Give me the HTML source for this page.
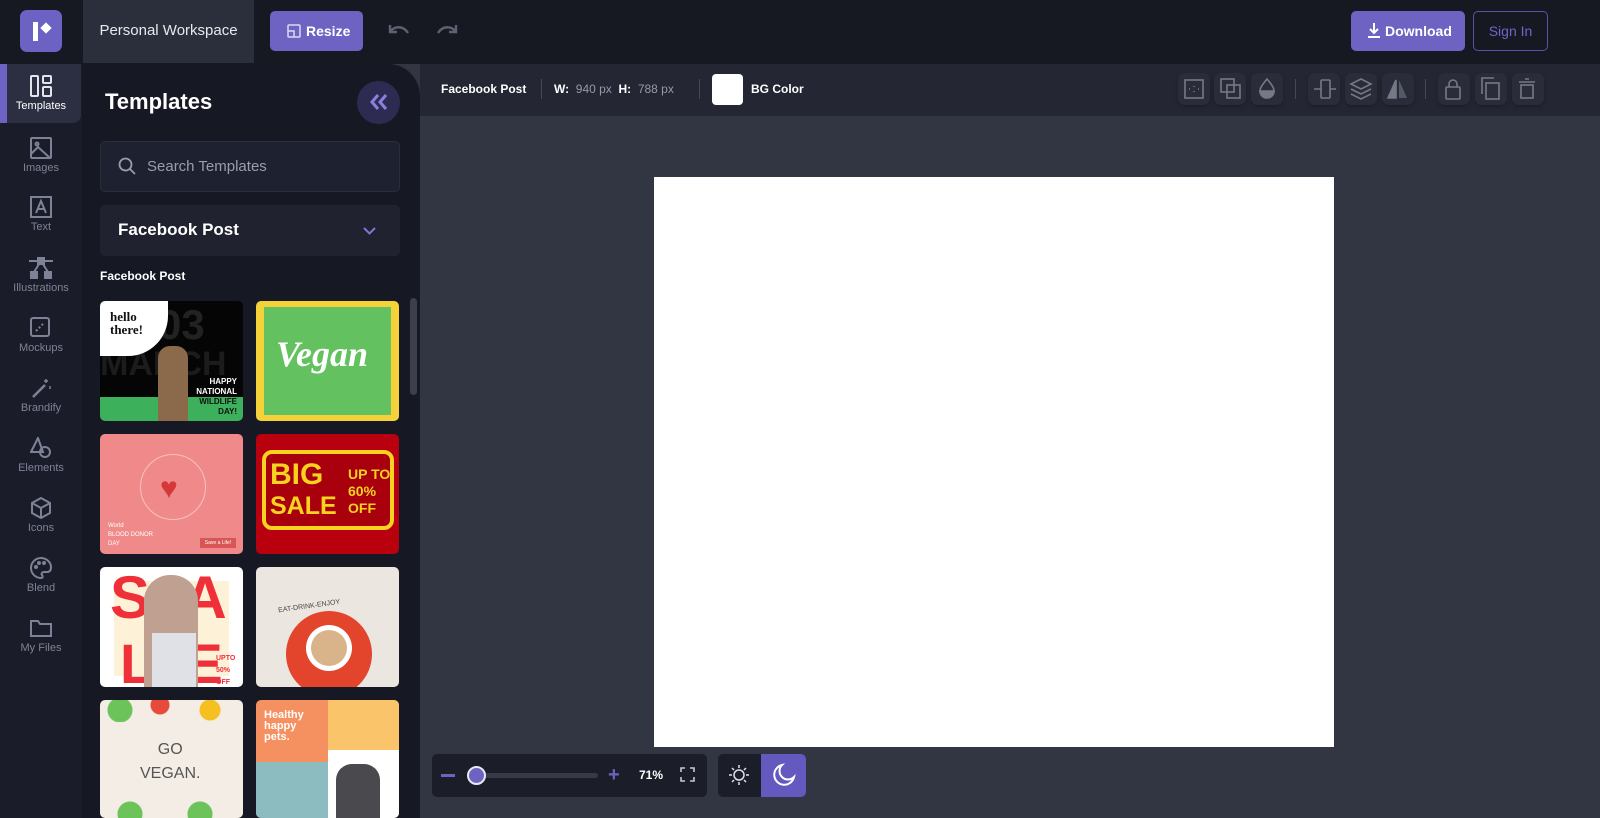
<!DOCTYPE html>
<html><head><meta charset="utf-8"><style>
*{margin:0;padding:0;box-sizing:border-box}
body{width:1600px;height:818px;overflow:hidden;background:#323542;font-family:"Liberation Sans",sans-serif;position:relative;color:#fff}
.a{position:absolute}
.top{left:0;top:0;width:1600px;height:64px;background:#161922}
.side{left:0;top:64px;width:82px;height:754px;background:#1a1d29}
.si{position:absolute;left:0;width:82px;text-align:center;font-size:11px;color:#7d8296}
.si svg{display:block;margin:0 auto 3px}
.panel{left:82px;top:64px;width:338px;height:754px;background:#161923;border-top-right-radius:32px}
.tb{left:420px;top:64px;width:1180px;height:52px;background:#242733}
.ib{position:absolute;top:73px;width:32px;height:32px;border-radius:7px;background:#2a2d39;box-shadow:0 2px 4px rgba(0,0,0,.25)}
.th{position:absolute;border-radius:5px;overflow:hidden}
</style></head><body>
<div class="a top"></div>
<div class="a" style="left:20px;top:10px;width:42px;height:42px;border-radius:7px;background:#6b62c3"></div>
<div class="a" style="left:33px;top:22px;width:5px;height:19px;background:#fff"></div>
<div class="a" style="left:42px;top:24px;width:8px;height:8px;background:#fff;transform:rotate(45deg)"></div>
<div class="a" style="left:83px;top:0;width:171px;height:63px;background:#2b2f3c;font-size:15px;line-height:62px;text-align:center;color:#e8e9ee">Personal Workspace</div>
<div class="a" style="left:270px;top:11px;width:93px;height:40px;border-radius:5px;background:#6e63c2;font-size:14px;font-weight:bold;line-height:40px;padding-left:36px">Resize</div>
<svg class="a" style="left:287px;top:24px" width="14" height="14" viewBox="0 0 14 14" fill="none" stroke="#dcdaf2" stroke-width="1.5"><rect x="1" y="1" width="12" height="12" rx="1"/><path d="M1 7h6v6"/></svg>
<svg class="a" style="left:387px;top:22px" width="24" height="16" viewBox="0 0 24 16" fill="none" stroke="#5d6170" stroke-width="2.4"><path d="M3 3v7h7"/><path d="M3 10C7 4 16 3 21 11"/></svg>
<svg class="a" style="left:435px;top:22px" width="24" height="16" viewBox="0 0 24 16" fill="none" stroke="#5d6170" stroke-width="2.4"><path d="M21 3v7h-7"/><path d="M21 10C17 4 8 3 3 11"/></svg>
<div class="a" style="left:1351px;top:11px;width:114px;height:40px;border-radius:5px;background:#6e63c2;font-size:14px;font-weight:bold;line-height:40px;padding-left:34px">Download</div>
<svg class="a" style="left:1367px;top:22px" width="14" height="16" viewBox="0 0 14 16" fill="none" stroke="#fff" stroke-width="2"><path d="M7 1v10M3 7l4 4 4-4M1 15h12"/></svg>
<div class="a" style="left:1473px;top:11px;width:75px;height:40px;border-radius:5px;border:1px solid #5a52a8;font-size:14px;line-height:38px;text-align:center;color:#6e66c8">Sign In</div>

<div class="a side"></div>
<div class="a" style="left:0;top:64px;width:81px;height:59px;background:#2c2f42;border-bottom-right-radius:8px"></div>
<div class="a" style="left:0;top:64px;width:7px;height:59px;background:#6e63c2"></div>
<div class="si" style="top:75px;color:#fff"><svg width="22" height="22" viewBox="0 0 22 22" fill="none" stroke="#e4e5ec" stroke-width="2"><rect x="1" y="1" width="7" height="20" rx="1"/><rect x="13" y="1" width="8" height="7" rx="1"/><rect x="13" y="12" width="8" height="9" rx="1"/></svg>Templates</div>
<div class="si" style="top:137px"><svg width="22" height="22" viewBox="0 0 22 22" fill="none" stroke="#7d8296" stroke-width="2"><rect x="1" y="1" width="20" height="20" rx="1"/><circle cx="7" cy="7" r="1.5"/><path d="M1 17l7-7 12 11"/></svg>Images</div>
<div class="si" style="top:196px"><svg width="22" height="22" viewBox="0 0 22 22" fill="none" stroke="#7d8296" stroke-width="2"><rect x="1" y="1" width="20" height="20"/><path d="M6 17l5-12 5 12M8 13h6"/></svg>Text</div>
<div class="si" style="top:257px"><svg width="26" height="22" viewBox="0 0 26 22" fill="none" stroke="#7d8296" stroke-width="2"><path d="M1 4h24M13 4L6 15M13 4l7 11"/><rect x="10" y="1" width="6" height="6" fill="#7d8296"/><rect x="3" y="15" width="6" height="6" fill="#7d8296"/><rect x="17" y="15" width="6" height="6" fill="#7d8296"/></svg>Illustrations</div>
<div class="si" style="top:317px"><svg width="22" height="22" viewBox="0 0 22 22" fill="none" stroke="#7d8296" stroke-width="2"><rect x="1" y="1" width="18" height="18" rx="2"/><path d="M6 14l7-7" stroke-dasharray="2 2"/></svg>Mockups</div>
<div class="si" style="top:377px"><svg width="22" height="22" viewBox="0 0 22 22" fill="none" stroke="#7d8296" stroke-width="2.5"><path d="M3 20l12-12"/><path d="M16 2v4M14 4h4M20 9v3" stroke-width="1.5"/></svg>Brandify</div>
<div class="si" style="top:437px"><svg width="22" height="22" viewBox="0 0 22 22" fill="none" stroke="#7d8296" stroke-width="2"><path d="M8 1L1 15h12z"/><circle cx="15" cy="15" r="5"/></svg>Elements</div>
<div class="si" style="top:497px"><svg width="22" height="22" viewBox="0 0 22 22" fill="none" stroke="#7d8296" stroke-width="2"><path d="M11 1l9 5v10l-9 5-9-5V6z M2 6l9 5 9-5M11 11v10"/></svg>Icons</div>
<div class="si" style="top:557px"><svg width="22" height="22" viewBox="0 0 22 22" fill="none" stroke="#7d8296" stroke-width="2"><path d="M11 1a10 10 0 100 20c2 0 2-2 1-3s0-3 2-3h3c3 0 4-2 4-5C21 5 16 1 11 1z"/><circle cx="6" cy="10" r="1" fill="#7d8296"/><circle cx="9" cy="6" r="1" fill="#7d8296"/><circle cx="14" cy="6" r="1" fill="#7d8296"/></svg>Blend</div>
<div class="si" style="top:617px"><svg width="22" height="22" viewBox="0 0 22 22" fill="none" stroke="#7d8296" stroke-width="2"><path d="M1 4h7l2 3h11v12H1z"/></svg>My Files</div>

<div class="a tb"></div>
<div class="a panel"></div>
<div class="a" style="left:105px;top:89px;font-size:22px;font-weight:bold">Templates</div>
<div class="a" style="left:357px;top:81px;width:43px;height:43px;border-radius:50%;background:#2e2b52"></div>
<svg class="a" style="left:369px;top:93px" width="20" height="18" viewBox="0 0 20 18" fill="none" stroke="#8a80e0" stroke-width="3"><path d="M9 2L3 9l6 7M17 2l-6 7 6 7"/></svg>
<div class="a" style="left:100px;top:141px;width:300px;height:51px;border-radius:5px;background:#1e2130;border:1px solid #2a2d3b;font-size:15px;color:#9a9eab;line-height:49px;padding-left:46px">Search Templates</div>
<svg class="a" style="left:118px;top:157px" width="18" height="18" viewBox="0 0 18 18" fill="none" stroke="#9a9eab" stroke-width="1.8"><circle cx="7.5" cy="7.5" r="6"/><path d="M12 12l5 5"/></svg>
<div class="a" style="left:100px;top:205px;width:300px;height:51px;border-radius:5px;background:#20232f;font-size:17px;font-weight:bold;line-height:50px;padding-left:18px">Facebook Post</div>
<svg class="a" style="left:363px;top:227px" width="13" height="9" viewBox="0 0 13 9" fill="none" stroke="#7d76d9" stroke-width="2"><path d="M1 1l5.5 5.5L12 1"/></svg>
<div class="a" style="left:100px;top:269px;font-size:12px;font-weight:bold">Facebook Post</div>
<div class="a" style="left:410px;top:298px;width:7px;height:97px;border-radius:4px;background:#3c3f4c"></div>

<div class="th" style="left:100px;top:301px;width:143px;height:120px;background:#050505">
 <div class="a" style="left:58px;top:0;font-size:42px;font-weight:bold;color:#222">03</div>
 <div class="a" style="left:0;top:44px;font-size:34px;font-weight:bold;color:#1c1c1c">MARCH</div>
 <div class="a" style="left:0;top:0;width:68px;height:55px;background:#fff;border-radius:0 0 40px 0"></div>
 <div class="a" style="left:10px;top:9px;font-size:13px;font-weight:bold;color:#111;line-height:13px;font-family:'Liberation Serif',serif">hello<br>there!</div>
 <div class="a" style="left:0;top:96px;width:143px;height:24px;background:#3cb05a"></div>
 <div class="a" style="left:58px;top:45px;width:30px;height:75px;background:#8a6a4a;border-radius:12px 12px 0 0"></div>
 <div class="a" style="right:6px;top:76px;font-size:8px;font-weight:bold;text-align:right;line-height:10px">HAPPY<br>NATIONAL<br><span style="color:#111">WILDLIFE<br>DAY!</span></div>
</div>
<div class="th" style="left:256px;top:301px;width:143px;height:120px;background:#f5d23a">
 <div class="a" style="left:8px;top:6px;width:127px;height:108px;background:#63c160"></div>
 <div class="a" style="left:20px;top:32px;font-size:36px;font-style:italic;font-weight:bold;font-family:'Liberation Serif',serif">Vegan</div>
</div>
<div class="th" style="left:100px;top:434px;width:143px;height:120px;background:#f08a8a">
 <div class="a" style="left:40px;top:20px;width:66px;height:66px;border-radius:50%;border:1px solid #f8c0c0"></div>
 <div class="a" style="left:60px;top:38px;font-size:30px;color:#d63838">♥</div>
 <div class="a" style="left:8px;top:88px;font-size:6px;line-height:9px">World<br>BLOOD DONOR<br>DAY</div>
 <div class="a" style="left:100px;top:104px;width:36px;height:10px;background:#d95656;font-size:5px;text-align:center;line-height:10px">Save a Life!</div>
</div>
<div class="th" style="left:256px;top:434px;width:143px;height:120px;background:#b8000e">
 <div class="a" style="left:6px;top:16px;width:132px;height:80px;border:4px solid #f7d21f;border-radius:10px;background:#a8000c"></div>
 <div class="a" style="left:14px;top:26px;font-size:30px;font-weight:bold;color:#f7d21f;line-height:30px">BIG<br><span style="font-size:25px">SALE</span></div>
 <div class="a" style="left:92px;top:32px;font-size:14px;font-weight:bold;color:#f7d21f;line-height:17px">UP TO<br>60%<br>OFF</div>
</div>
<div class="th" style="left:100px;top:567px;width:143px;height:120px;background:#fff">
 <div class="a" style="left:14px;top:14px;width:115px;height:95px;background:#fdf2d8"></div>
 <div class="a" style="left:10px;top:-4px;font-size:60px;font-weight:bold;color:#f03038">S&nbsp;&nbsp;A</div>
 <div class="a" style="left:20px;top:64px;font-size:56px;font-weight:bold;color:#f03038">L&nbsp;&nbsp;E</div>
 <div class="a" style="left:44px;top:8px;width:54px;height:112px;background:#c0a090;border-radius:26px 26px 0 0"></div>
 <div class="a" style="left:52px;top:66px;width:44px;height:54px;background:#dfe1e6"></div>
 <div class="a" style="left:116px;top:86px;font-size:7px;font-weight:bold;color:#f03038;line-height:12px">UPTO<br>50%<br>OFF</div>
</div>
<div class="th" style="left:256px;top:567px;width:143px;height:120px;background:#ece6e1">
 <div class="a" style="left:30px;top:44px;width:86px;height:86px;border-radius:50%;background:#e3442c"></div>
 <div class="a" style="left:50px;top:58px;width:46px;height:46px;border-radius:50%;background:#fff"></div>
 <div class="a" style="left:55px;top:63px;width:36px;height:36px;border-radius:50%;background:#d9b48a"></div>
 <div class="a" style="left:22px;top:36px;font-size:7px;color:#444;transform:rotate(-8deg)">EAT-DRINK-ENJOY</div>
</div>
<div class="th" style="left:100px;top:700px;width:143px;height:118px;background:#f4ede5">
 <div class="a" style="left:0;top:0;width:143px;height:22px;background:radial-gradient(circle at 20px 10px,#6cc35a 12px,transparent 13px),radial-gradient(circle at 110px 10px,#f5c020 10px,transparent 11px),radial-gradient(circle at 60px 5px,#e84a3a 9px,transparent 10px)"></div>
 <div class="a" style="left:40px;top:38px;font-size:16px;color:#555;text-align:center;line-height:24px">GO<br>VEGAN.</div>
 <div class="a" style="left:0;top:96px;width:143px;height:22px;background:radial-gradient(circle at 30px 18px,#6cc35a 12px,transparent 13px),radial-gradient(circle at 100px 18px,#6cc35a 12px,transparent 13px)"></div>
</div>
<div class="th" style="left:256px;top:700px;width:143px;height:118px;background:#f59060">
 <div class="a" style="left:72px;top:0;width:71px;height:60px;background:#f9c46a"></div>
 <div class="a" style="left:0;top:62px;width:72px;height:56px;background:#8cbcc0"></div>
 <div class="a" style="left:72px;top:50px;width:71px;height:68px;background:#fff"></div>
 <div class="a" style="left:80px;top:64px;width:44px;height:54px;background:#4a4a4e;border-radius:16px 16px 0 0"></div>
 <div class="a" style="left:8px;top:10px;font-size:11px;font-weight:bold;line-height:11px">Healthy<br>happy<br>pets.</div>
</div>

<div class="a" style="left:441px;top:82px;font-size:12px;font-weight:bold">Facebook Post</div>
<div class="a" style="left:541px;top:79px;width:1px;height:20px;background:#454856"></div>
<div class="a" style="left:554px;top:82px;font-size:12px;font-weight:bold">W:<span style="color:#9599a8;font-weight:normal"> &nbsp;940 px</span> &nbsp;H:<span style="color:#9599a8;font-weight:normal"> &nbsp;788 px</span></div>
<div class="a" style="left:699px;top:79px;width:1px;height:20px;background:#454856"></div>
<div class="a" style="left:712px;top:74px;width:31px;height:31px;border-radius:4px;background:#fff"></div>
<div class="a" style="left:751px;top:82px;font-size:12px;font-weight:bold">BG Color</div>

<div class="ib" style="left:1178px"></div><div class="ib" style="left:1214px"></div><div class="ib" style="left:1251px"></div>
<div class="a" style="left:1295px;top:79px;width:1px;height:20px;background:#454856"></div>
<div class="ib" style="left:1308px"></div><div class="ib" style="left:1345px"></div><div class="ib" style="left:1382px"></div>
<div class="a" style="left:1425px;top:79px;width:1px;height:20px;background:#454856"></div>
<div class="ib" style="left:1438px"></div><div class="ib" style="left:1475px"></div><div class="ib" style="left:1512px"></div>
<svg class="a" style="left:1178px;top:73px" width="370" height="32" viewBox="1178 73 370 32" fill="none" stroke="#757987" stroke-width="1.6">
<rect x="1185" y="80" width="18" height="18"/><path d="M1194 86v1M1194 91v1M1189 89h1M1198 89h1"/>
<rect x="1221" y="79" width="13" height="13"/><rect x="1227" y="85" width="13" height="13"/>
<path d="M1267 79c-5 6-7 9-7 12a7 7 0 0014 0c0-3-2-6-7-12z"/><path d="M1260 91h14a7 7 0 01-14 0z" fill="#757987"/>
<path d="M1314 89h7M1330 89h6"/><rect x="1321" y="80" width="9" height="18" rx="1"/>
<path d="M1361 79l-10 5 10 5 10-5zM1351 89l10 5 10-5M1351 94l10 5 10-5"/>
<path d="M1396 80l-8 18h8z" fill="#757987"/><path d="M1399 80l8 18h-8z" fill="#555866" stroke="none"/>
<rect x="1446" y="87" width="14" height="12" rx="1"/><path d="M1449 87v-3a4 4 0 018 0v3"/>
<rect x="1486" y="83" width="13" height="16"/><path d="M1482 94V78h12"/>
<path d="M1519 82h16M1525 79h4"/><rect x="1521" y="85" width="12" height="13"/>
</svg>

<div class="a" style="left:654px;top:177px;width:680px;height:570px;background:#fff"></div>

<div class="a" style="left:432px;top:754px;width:275px;height:43px;border-radius:5px;background:#1b1d28"></div>
<div class="a" style="left:441px;top:774px;width:14px;height:3px;background:#6e63c2"></div>
<div class="a" style="left:470px;top:773px;width:128px;height:5px;border-radius:3px;background:#363946"></div>
<div class="a" style="left:467px;top:766px;width:19px;height:19px;border-radius:50%;background:#6e63c2;border:2px solid #e8e8f0"></div>
<div class="a" style="left:608px;top:767px;font-size:20px;font-weight:bold;color:#6e63c2;line-height:16px">+</div>
<div class="a" style="left:639px;top:768px;font-size:12px;font-weight:bold">71%</div>
<svg class="a" style="left:680px;top:767px" width="15" height="15" viewBox="0 0 15 15" fill="none" stroke="#c7c9d3" stroke-width="1.6"><path d="M1 5V1h4M10 1h4v4M14 10v4h-4M5 14H1v-4"/></svg>
<div class="a" style="left:718px;top:754px;width:88px;height:43px;border-radius:5px;background:#1b1d28;overflow:hidden"><div class="a" style="left:43px;top:0;width:45px;height:43px;background:#6459be"></div></div>
<svg class="a" style="left:728px;top:764px" width="22" height="22" viewBox="0 0 22 22" fill="none" stroke="#e0e1e8" stroke-width="1.5"><circle cx="11" cy="11" r="5"/><path d="M11 1v3M11 18v3M1 11h3M18 11h3M4 4l2 2M16 16l2 2M4 18l2-2M16 6l2-2"/></svg>
<svg class="a" style="left:772px;top:763px" width="24" height="24" viewBox="0 0 24 24" fill="none" stroke="#fff" stroke-width="2"><path d="M10 2a10 10 0 1012 12A8 8 0 0110 2z"/></svg>
</body></html>
